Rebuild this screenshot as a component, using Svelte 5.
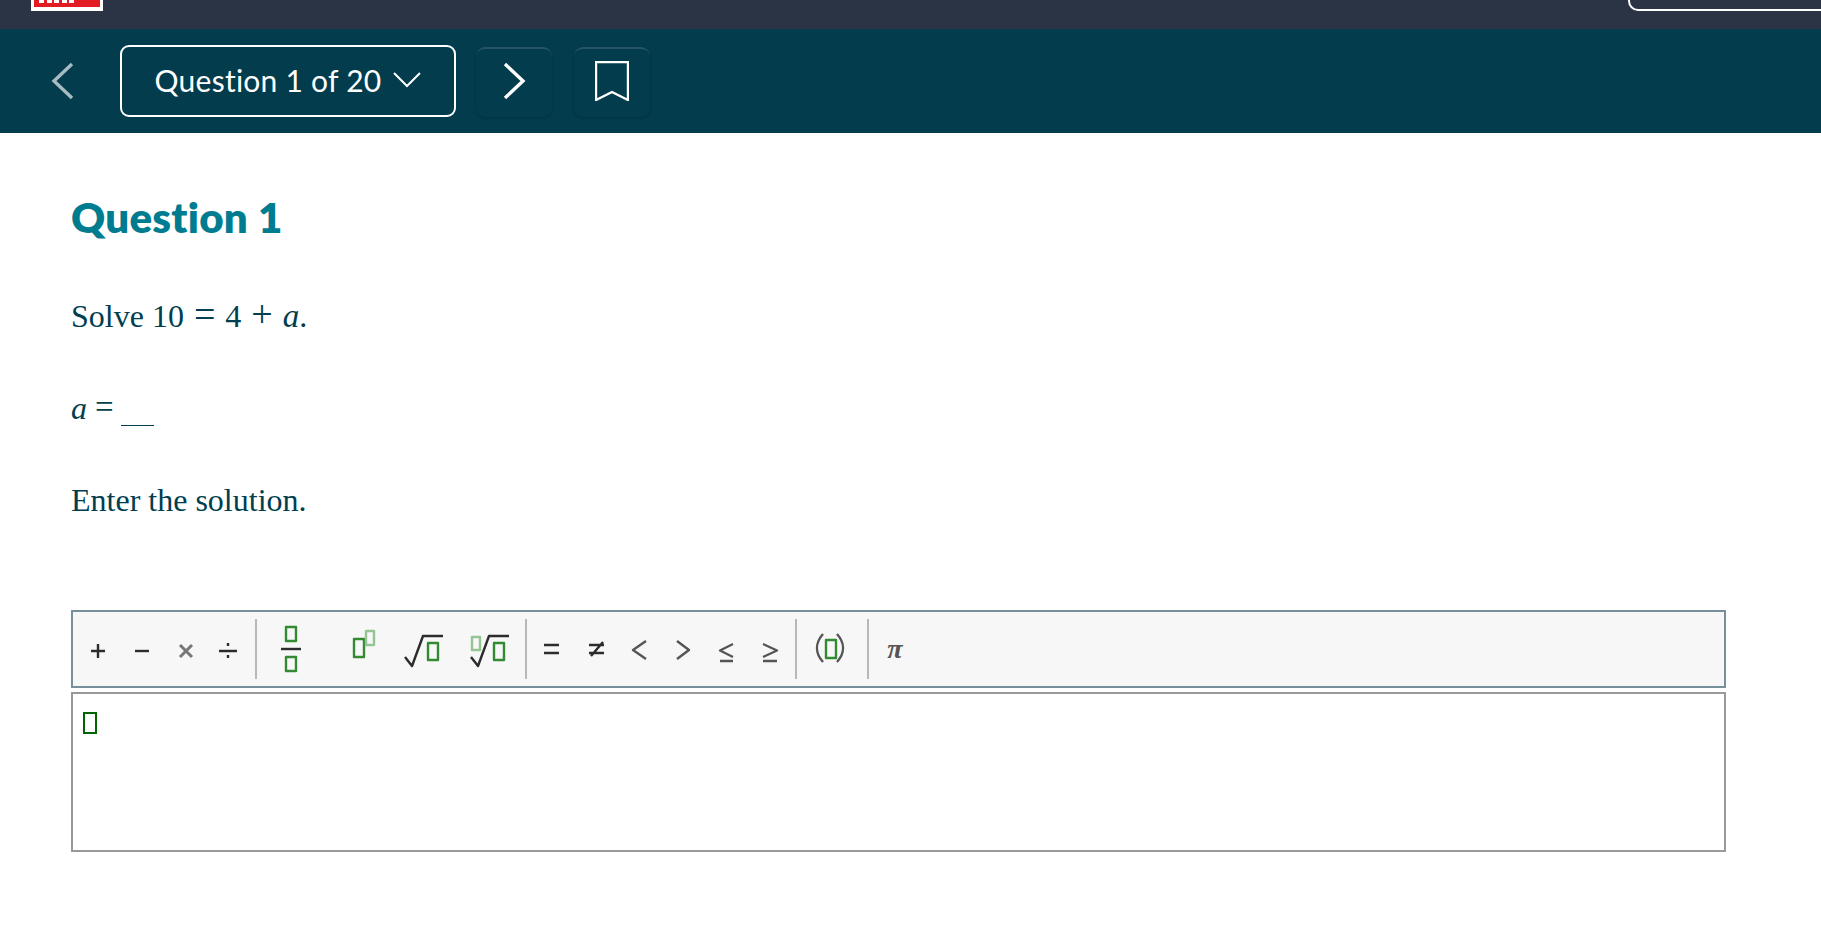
<script lang="ts">
  const G = 'g', L = 'l';
  // Math palette, grouped the way the toolbar separates them. Coordinates are local to each button.
  type Shape = { d?: string; box?: number[]; tone?: string };
  const plain = (d: string, tone = 'ink'): Shape => ({ d, tone });
  const box = (x: number, y: number, w: number, h: number, tone = G): Shape => ({ box: [x, y, w, h], tone });
  const radical = 'M15 38 L22 47 L33 17 H53';

  const groups = [
    { cls: 'first', wide: false, buttons: [
      { label: 'plus', shapes: [plain('M15 32 H29 M22 25 V39')] },
      { label: 'minus', shapes: [plain('M15 32 H29')] },
      { label: 'times', shapes: [plain('M16 26 L28 38 M28 26 L16 38', 'soft')] },
      { label: 'divide', shapes: [plain('M11 32 H29 M20 24 V27 M20 36 V39')] }
    ] },
    { cls: 'second', wide: true, buttons: [
      { label: 'fraction', shapes: [box(28, 8, 10, 14), plain('M23 30 H43'), box(28, 38, 10, 14)] },
      { label: 'superscript', shapes: [box(30, 20, 10, 18), box(42, 12, 8, 14, L)] },
      { label: 'square root', shapes: [plain(radical), box(38, 24, 10, 17)] },
      { label: 'nth root', shapes: [plain(radical), box(38, 24, 10, 17), box(16, 18, 8, 13, L)] }
    ] },
    { cls: 'third', wide: false, buttons: [
      { label: 'equals', shapes: [plain('M14 26 H29 M14 34 H29')] },
      { label: 'not equal', shapes: [plain('M15 26 H30 M15 34 H30 M17 37 L29 23')] },
      { label: 'less than', shapes: [plain('M28 22 L15 31 L28 40', 'mid')] },
      { label: 'greater than', shapes: [plain('M15 22 L27 31 L15 40', 'mid')] },
      { label: 'less or equal', shapes: [plain('M27 25 L14 31.5 L27 38 M14 42 H27', 'mid')] },
      { label: 'greater or equal', shapes: [plain('M13 25 L27 31.5 L13 38 M13 42 H27', 'mid')] }
    ] },
    { cls: 'fourth', wide: true, buttons: [
      { label: 'parentheses', shapes: [plain('M25 15 C17 24 17 34 25 43 M39 15 C47 24 47 34 39 43', 'mid'), box(28, 21, 10, 18)] }
    ] }
  ];
</script>

<div class="page">
  <header class="topbar">
    <div class="logo"><span></span><span></span><span></span><span></span><span></span></div>
    <div class="account"></div>
  </header>

  <nav class="qnav">
    <button class="arrow back" aria-label="Previous question">
      <svg width="24" height="38" viewBox="0 0 24 38"><path d="M21 2 L3 19 L21 36" /></svg>
    </button>
    <button class="picker">
      <span>Question 1 of 20</span>
      <svg width="28" height="16" viewBox="0 0 28 16"><path d="M1 1 L14 14 L27 1" /></svg>
    </button>
    <button class="tile" aria-label="Next question">
      <svg width="24" height="38" viewBox="0 0 24 38"><path d="M3 2 L21 19 L3 36" /></svg>
    </button>
    <button class="tile" aria-label="Bookmark">
      <svg class="mark" width="34" height="40" viewBox="0 0 34 40"><path d="M1 1 H33 V39 L17 31 L1 39 Z" /></svg>
    </button>
  </nav>

  <main class="content">
    <h1>Question 1</h1>
    <p class="solve">Solve 10<span class="op">=</span>4<span class="op">+</span><i>a</i>.</p>
    <p class="blank"><i>a</i> <small>=</small> <span class="line"></span></p>
    <p class="enter">Enter the solution.</p>

    <div class="toolbar">
      {#each groups as group}
        <div class="group {group.cls}">
          {#each group.buttons as b}
            <button class="key" class:wide={group.wide} aria-label={b.label}>
              <svg width={group.wide ? 66 : 44} height="60">
                {#each b.shapes as s}
                  {#if s.box}
                    <rect class={s.tone} x={s.box[0]} y={s.box[1]} width={s.box[2]} height={s.box[3]} />
                  {:else}
                    <path class={s.tone} d={s.d} />
                  {/if}
                {/each}
              </svg>
            </button>
          {/each}
        </div>
      {/each}
      <button class="key pi">π</button>
    </div>

    <div class="editor"><span class="caret"></span></div>
  </main>
</div>

<style>
  :global(body) {
    margin: 0;
    background: #fff;
  }

  .page {
    height: 925px;
    overflow: hidden;
  }

  button {
    background: none;
    border: none;
    padding: 0;
    display: flex;
    align-items: center;
    justify-content: center;
    cursor: pointer;
  }

  .topbar {
    height: 29px;
    background: #2a3444;
    display: flex;
    justify-content: space-between;
    align-items: flex-end;
    padding: 0 0 18px 31px;
    box-sizing: border-box;
  }

  .logo {
    width: 72px;
    height: 11px;
    background: #e31b23;
    border: solid #fff;
    border-width: 0 3px 4px;
    box-sizing: border-box;
    display: flex;
    gap: 2.5px;
    padding-left: 5px;
    align-items: flex-start;
  }

  .logo span {
    width: 5px;
    height: 3px;
    background: #fff;
  }

  .account {
    width: 193px;
    height: 11px;
    border: 2px solid #fff;
    border-top: none;
    border-right: none;
    border-radius: 0 0 0 10px;
    box-sizing: border-box;
  }

  .qnav {
    height: 104px;
    background: #023c4d;
    display: flex;
    align-items: center;
    padding-left: 51px;
  }

  .qnav svg path {
    fill: none;
    stroke: #fff;
    stroke-width: 3.4;
  }

  .arrow {
    width: 24px;
    height: 38px;
    margin-right: 45px;
    opacity: 0.65;
  }

  .picker {
    width: 336px;
    height: 72px;
    box-sizing: border-box;
    border: 2px solid #fff;
    border-radius: 9px;
    margin-right: 20px;
    padding-bottom: 3px;
    color: #fff;
    font-family: Lato, "Open Sans", sans-serif;
    font-size: 30px;
    letter-spacing: 0.25px;
    font-variant-ligatures: none;
    gap: 12px;
  }

  .picker svg path {
    stroke-width: 2;
  }

  .tile {
    width: 76px;
    height: 70px;
    margin-top: 2px;
    margin-right: 22px;
    padding-bottom: 4px;
    border-radius: 9px;
    border-top: 2px solid #255565;
    box-shadow: 0 1px 2px #03333f;
    box-sizing: border-box;
  }

  .qnav .mark path {
    stroke-width: 2.4;
  }

  .content {
    padding: 0 95px 0 71px;
    color: #003e50;
    font-family: "Liberation Serif", serif;
    font-size: 32px;
  }

  h1 {
    margin: 59px 0 0;
    color: #007c91;
    font-family: Lato, sans-serif;
    font-size: 42px;
    font-weight: 800;
    letter-spacing: 0.25px;
    line-height: 50px;
    font-variant-ligatures: none;
  }

  p {
    margin: 0;
    line-height: 40px;
  }

  .solve {
    margin-top: 52px;
    height: 42px;
    display: flex;
    align-items: baseline;
  }

  .solve .op {
    font-size: 38px;
    margin: 0 10px;
  }

  .solve i {
    font-size: 33px;
  }

  .blank {
    margin-top: 52px;
    display: flex;
    gap: 8px;
    height: 40px;
  }

  .blank small {
    font-size: 33px;
    line-height: 38px;
  }

  .line {
    width: 33px;
    height: 1px;
    background: #003e50;
    margin-top: 37px;
    margin-left: -1px;
  }

  .enter {
    margin-top: 52px;
  }

  .toolbar {
    margin-top: 90px;
    height: 78px;
    box-sizing: border-box;
    border: 2px solid #78909c;
    background: #f7f7f7;
    display: flex;
    align-items: center;
    padding-left: 2px;
  }

  .group {
    display: flex;
    height: 60px;
    border-right: 2px solid #b8b8b8;
    padding: 0 3px 0 1px;
  }

  .group.third {
    padding: 0 1px 0 3px;
  }

  .group.fourth {
    padding-right: 3px;
    margin-right: 4px;
  }

  .key {
    width: 44px;
    height: 60px;
    flex: none;
  }

  .key.wide {
    width: 66px;
  }

  .key svg {
    filter: blur(0.4px);
  }

  .key path,
  .key rect {
    fill: none;
    stroke-width: 2.4;
    stroke-linejoin: round;
  }

  .key .ink {
    stroke: #2c2c2c;
  }

  .key .mid {
    stroke: #555;
  }

  .key .soft {
    stroke: #777;
    stroke-width: 3;
  }

  .key .g {
    stroke: #338a33;
  }

  .key .l {
    stroke: #93c693;
  }

  .pi {
    font-family: "Liberation Serif", serif;
    font-style: italic;
    font-weight: bold;
    font-size: 28px;
    color: #555;
  }

  .editor {
    margin-top: 4px;
    height: 160px;
    box-sizing: border-box;
    border: 2px solid #999;
    padding: 18px 10px;
  }

  .caret {
    display: block;
    width: 14px;
    height: 22px;
    box-sizing: border-box;
    border: 2px solid #006400;
  }
</style>
